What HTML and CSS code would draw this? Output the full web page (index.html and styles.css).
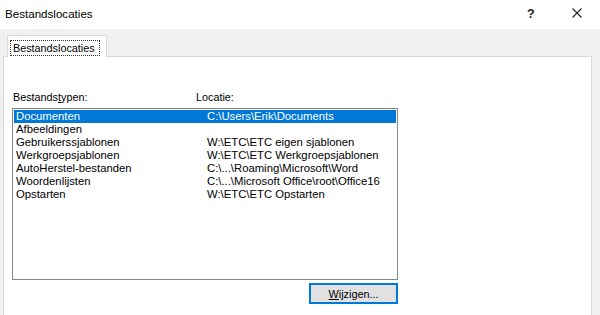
FILE: index.html
```html
<!DOCTYPE html>
<html lang="nl">
<head>
    <meta charset="UTF-8">
    <title>Bestandslocaties</title>
    <link rel="stylesheet" href="styles.css">
</head>
<body>
    <div class="dialog">
        <div class="titlebar">
            <span class="title">Bestandslocaties</span>
            <span class="help">?</span>
            <span class="close">
                <svg width="10" height="10" viewBox="0 0 10 10"><path d="M0.5 0.5 L9.5 9.5 M9.5 0.5 L0.5 9.5" stroke="#222" stroke-width="1.1"/></svg>
            </span>
        </div>

        <div class="body">
            <div class="tabs">
                <div class="tab"><span class="focus">Bestandslocaties</span></div>
            </div>
            <div class="panel">
                <div class="headers">
                    <span class="col-type">Bestands<u>t</u>ypen:</span>
                    <span class="col-loc">Locatie:</span>
                </div>
                <div class="list">
                    <div class="row selected"><span class="col-type">Documenten</span><span class="col-loc">C:\Users\Erik\Documents</span></div>
                    <div class="row"><span class="col-type">Afbeeldingen</span><span class="col-loc"></span></div>
                    <div class="row"><span class="col-type">Gebruikerssjablonen</span><span class="col-loc">W:\ETC\ETC eigen sjablonen</span></div>
                    <div class="row"><span class="col-type">Werkgroepsjablonen</span><span class="col-loc">W:\ETC\ETC Werkgroepsjablonen</span></div>
                    <div class="row"><span class="col-type">AutoHerstel-bestanden</span><span class="col-loc">C:\...\Roaming\Microsoft\Word</span></div>
                    <div class="row"><span class="col-type">Woordenlijsten</span><span class="col-loc">C:\...\Microsoft Office\root\Office16</span></div>
                    <div class="row"><span class="col-type">Opstarten</span><span class="col-loc">W:\ETC\ETC Opstarten</span></div>
                </div>
                <div class="actions">
                    <button class="btn"><u>W</u>ijzigen...</button>
                </div>
            </div>
        </div>
    </div>
</body>
</html>
```

FILE: styles.css
```css
* {
    margin: 0;
    padding: 0;
    box-sizing: border-box;
}

body {
    width: 600px;
    height: 315px;
    overflow: hidden;
    font-family: "Liberation Sans", Arial, sans-serif;
    font-size: 10.8px;
    color: #000;
    background-color: #f0f0f0;
}

/* Titelbalk */
.titlebar {
    height: 29px;
    background-color: #ffffff;
    display: flex;
    align-items: center;
    padding-left: 5px;
    padding-right: 18px;
}

.title {
    font-size: 11.6px;
    flex: 1;
    padding-bottom: 2px;
}

.help {
    font-size: 12.5px;
    font-weight: bold;
    color: #222;
    width: 45px;
    text-align: left;
    padding-bottom: 2px;
}

.close {
    display: flex;
    align-items: center;
    padding-bottom: 4px;
}

/* Tabblad + paneel */
.body {
    padding: 6px 8px 0 3px;
}

.tabs {
    display: flex;
    padding-left: 4px;
    height: 21px;
}

.tab {
    background-color: #ffffff;
    border: 1px solid #d9d9d9;
    border-bottom: none;
    padding: 4px 6px 0 2px;
    width: 100px;
    height: 22px;
    position: relative;
    z-index: 1;
}

.tab .focus {
    display: block;
    border: 1px dotted #333;
    padding: 0 2px;
    line-height: 14px;
    white-space: nowrap;
}

.panel {
    background-color: #ffffff;
    border: 1px solid #d9d9d9;
    height: 270px;
    padding: 34px 0 0 8px;
}

.headers {
    display: flex;
    height: 17px;
    padding-left: 1px;
    white-space: nowrap;
}

.headers .col-type {
    width: 183px;
}

.list {
    width: 386px;
    height: 172px;
    border: 1px solid #828790;
    padding: 1px;
    font-size: 11.3px;
}

.row {
    display: flex;
    height: 13px;
    line-height: 13px;
    padding-left: 2px;
    white-space: nowrap;
}

.row .col-type {
    width: 191px;
    flex-shrink: 0;
}

.row.selected {
    background-color: #0078d7;
    color: #ffffff;
}

.actions {
    width: 386px;
    display: flex;
    justify-content: flex-end;
    padding-top: 3px;
}

.btn {
    font-family: inherit;
    font-size: 10.8px;
    width: 89px;
    height: 21px;
    background-color: #e1e1e1;
    border: 2px solid #0078d7;
}
```
